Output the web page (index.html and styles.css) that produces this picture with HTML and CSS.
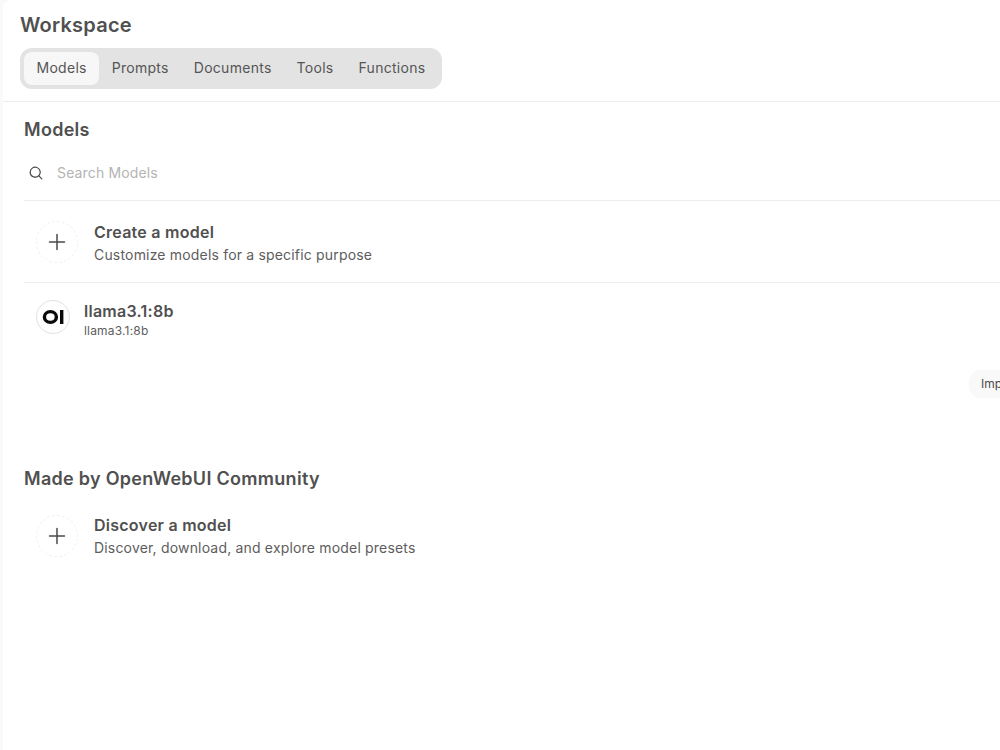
FILE: index.html
```html
<!DOCTYPE html>
<html lang="en">
<head>
<meta charset="utf-8">
<title>Workspace</title>
<link rel="stylesheet" href="styles.css">
</head>
<body>
<div class="app">
  <div class="rail"></div>
  <main class="main">
    <header class="top">
      <h1 class="title">Workspace</h1>
      <nav class="tabs">
        <a class="tab active">Models</a>
        <a class="tab">Prompts</a>
        <a class="tab">Documents</a>
        <a class="tab">Tools</a>
        <a class="tab">Functions</a>
      </nav>
    </header>
    <section class="content">
      <h2 class="heading">Models</h2>
      <div class="search">
        <svg class="search-icon" viewBox="0 0 20 20" fill="currentColor"><path fill-rule="evenodd" clip-rule="evenodd" d="M9 3.5a5.5 5.5 0 1 0 0 11 5.5 5.5 0 0 0 0-11ZM2 9a7 7 0 1 1 12.452 4.391l3.328 3.329a.75.75 0 1 1-1.06 1.06l-3.329-3.328A7 7 0 0 1 2 9Z"/></svg>
        <span class="placeholder">Search Models</span>
      </div>
      <div class="rule"></div>
      <div class="action">
        <div class="plus">
          <svg viewBox="0 0 24 24" fill="none" stroke="currentColor" stroke-width="1.5" stroke-linecap="round"><path d="M12 4.5v15M4.5 12h15"/></svg>
        </div>
        <div class="action-text create-text">
          <div class="action-title">Create a model</div>
          <div class="action-sub">Customize models for a specific purpose</div>
        </div>
      </div>
      <div class="rule"></div>
      <div class="model">
        <div class="logo">
          <svg viewBox="0 0 32 32" fill="none"><ellipse cx="13.4" cy="16" rx="6" ry="5.4" stroke="#0a0a0a" stroke-width="3.4"/><rect x="23" y="9" width="3.4" height="14" fill="#0a0a0a"/></svg>
        </div>
        <div>
          <div class="model-name">llama3.1:8b</div>
          <div class="model-id">llama3.1:8b</div>
        </div>
      </div>
      <div class="import-row">
        <button class="import">Import Models</button>
      </div>
      <h2 class="heading community">Made by OpenWebUI Community</h2>
      <div class="action discover">
        <div class="plus">
          <svg viewBox="0 0 24 24" fill="none" stroke="currentColor" stroke-width="1.5" stroke-linecap="round"><path d="M12 4.5v15M4.5 12h15"/></svg>
        </div>
        <div class="action-text">
          <div class="action-title">Discover a model</div>
          <div class="action-sub">Discover, download, and explore model presets</div>
        </div>
      </div>
    </section>
  </main>
</div>
</body>
</html>
```
FILE: styles.css
```css
* { box-sizing: border-box; }
html, body { margin: 0; height: 100%; overflow: hidden; background: #f9f9f9; }
body { font-family: Inter, "Liberation Sans", sans-serif; color: #505050; }
.app { display: flex; width: 1000px; height: 750px; overflow: hidden; }
.rail { flex: 0 0 3px; background: #f9f9f9; }
.main { flex: 0 0 1300px; height: 750px; background: #fff; border-top-left-radius: 8px; }
.top { height: 102px; padding: 11px 0 0 17px; border-bottom: 1px solid #ececec; }
.title { margin: 0; font-size: 20px; line-height: 28px; font-weight: 600; letter-spacing: 0.22px; color: #505050; }
.tabs { display: inline-flex; margin-top: 9px; padding: 4px; height: 41px; background: #e3e3e3; border-radius: 12px; font-size: 14px; line-height: 20px; letter-spacing: 0.28px; }
.tab { display: block; padding: 6px 12.5px; border-radius: 8px; color: #555; }
.active { background: #f7f7f7; }
.content { padding: 16px 0 0 21px; }
.heading { margin: 0; font-size: 18px; line-height: 24px; font-weight: 600; letter-spacing: 0.29px; color: #505050; }
.search { display: flex; align-items: center; height: 24px; margin-top: 19px; padding-left: 4px; gap: 13px; }
.search-icon { width: 16px; height: 16px; color: #4a4a4a; }
.placeholder { font-size: 14px; line-height: 20px; letter-spacing: 0.15px; color: #b4b4b4; }
.rule { height: 1px; background: #ececec; margin-top: 15px; }
.action { display: flex; align-items: center; gap: 16px; height: 81px; padding-left: 12px; }
.plus { flex: none; width: 42px; height: 42px; border-radius: 50%; border: 1px dashed #f0f0f0; display: flex; align-items: center; justify-content: center; color: #4a4a4a; }
.plus svg { width: 24px; height: 24px; }
.action-text { margin-top: 2px; }
.create-text { margin-top: 4px; }
.action-title { font-size: 16px; line-height: 22px; font-weight: 600; letter-spacing: 0.25px; }
.action-sub { font-size: 14px; line-height: 23px; letter-spacing: 0.18px; color: #5d5d5d; }
.action + .rule { margin-top: 0; }
.model { display: flex; align-items: flex-start; gap: 14px; padding: 17px 0 0 12px; }
.logo { flex: none; width: 34px; height: 34px; border-radius: 50%; border: 1px solid #e2e2e2; display: flex; align-items: center; justify-content: center; }
.logo svg { width: 32px; height: 32px; }
.model-name { font-size: 16px; line-height: 22px; font-weight: 600; letter-spacing: 0.27px; }
.model-id { font-size: 12px; line-height: 18px; letter-spacing: 0.18px; color: #5d5d5d; }
.import-row { padding-left: 945px; margin-top: 30px; }
.import { font: 12px/16px Inter, "Liberation Sans", sans-serif; color: #4a4a4a; background: #f9f9f9; border: 0; border-radius: 12px; padding: 6px 12px; height: 28px; white-space: nowrap; }
.community { margin-top: 69px; }
.discover { margin-top: 4px; }
```
